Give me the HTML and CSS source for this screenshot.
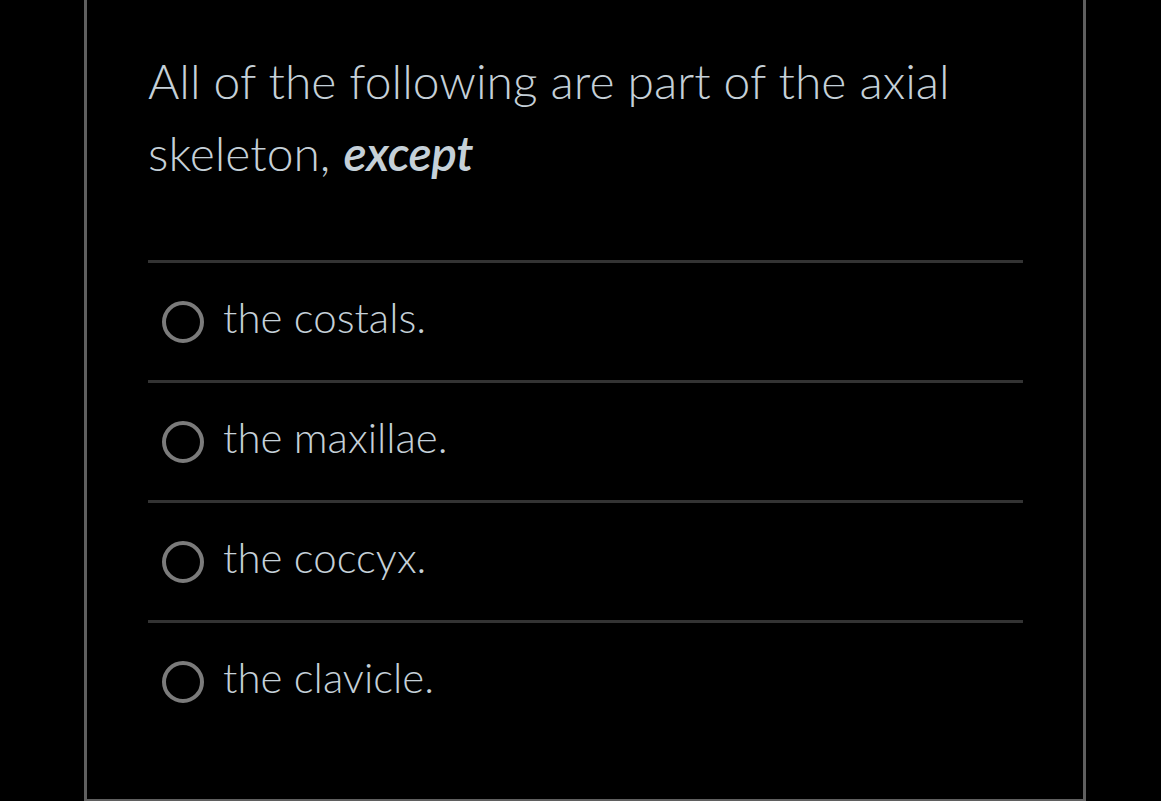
FILE: index.html
```html
<!DOCTYPE html>
<html lang="en">
<head>
<meta charset="utf-8">
<title>Question</title>
<link rel="stylesheet" href="styles.css">
</head>
<body>
<div class="panel">
  <div class="question">All of the following are part of the axial skeleton, <em>except</em></div>
  <ul class="options">
    <li class="option"><span class="radio"></span><span class="label">the costals.</span></li>
    <li class="option"><span class="radio"></span><span class="label">the maxillae.</span></li>
    <li class="option"><span class="radio"></span><span class="label">the coccyx.</span></li>
    <li class="option"><span class="radio"></span><span class="label">the clavicle.</span></li>
  </ul>
</div>
</body>
</html>
```

FILE: styles.css
```css
html, body {
  margin: 0;
  padding: 0;
  background: #000;
  height: 100%;
  overflow: hidden;
}
body {
  font-family: Lato, "Open Sans", sans-serif;
  color: #c5d0d8;
}
.panel {
  box-sizing: border-box;
  margin-left: 84px;
  width: 1002px;
  height: 802px;
  border: 3px solid #5f5f5f;
  border-top: none;
  padding: 45px 60px 0 61px;
}
.question {
  font-size: 48px;
  font-weight: 300;
  line-height: 72px;
  padding-right: 60px;
}
.question em {
  font-style: italic;
  font-weight: 600;
  letter-spacing: -0.4px;
}
.options {
  list-style: none;
  margin: 71px 0 0 0;
  padding: 0;
}
.option {
  display: flex;
  align-items: center;
  height: 117px;
  border-top: 3px solid #333;
}
.radio {
  box-sizing: border-box;
  width: 42px;
  height: 42px;
  border: 4px solid #7b7b7b;
  border-radius: 50%;
  margin-left: 14px;
  margin-right: 19px;
  flex: none;
}
.label {
  font-size: 42px;
  font-weight: 300;
  line-height: 1;
  padding-bottom: 10px;
}
```
